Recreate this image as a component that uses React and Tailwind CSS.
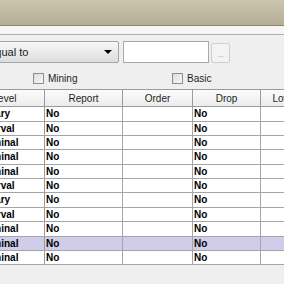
import React from 'react';

const rows = [
  { level: 'Binary', h: 'h-[15px]' },
  { level: 'Interval', h: 'h-[14px]' },
  { level: 'Nominal', h: 'h-[14px]' },
  { level: 'Nominal', h: 'h-[15px]' },
  { level: 'Nominal', h: 'h-[14px]' },
  { level: 'Interval', h: 'h-[14px]' },
  { level: 'Binary', h: 'h-[15px]' },
  { level: 'Interval', h: 'h-[14px]' },
  { level: 'Nominal', h: 'h-[15px]' },
  { level: 'Nominal', h: 'h-[14px]', selected: true },
  { level: 'Nominal', h: 'h-[14px]' },
];

const cols = 'grid grid-cols-[80px_78px_70px_68px_75px]';

function Checkbox({ label }) {
  return (
    <label className="flex w-[139px] items-center gap-[4px]">
      <span className="h-[11px] w-[11px] border border-[#8e8f8f] bg-gradient-to-br from-[#dcdcdc] to-[#f8f8f8]" />
      <span>{label}</span>
    </label>
  );
}

export default function App() {
  return (
    <div className="h-[284px] w-[284px] overflow-hidden bg-[#efefef] text-[10px] text-[#1e1e1e] [font-family:'Liberation_Sans',Arial,sans-serif]">
      {/* title bar */}
      <div className="h-[26px] border-b border-[#8b846f] bg-gradient-to-b from-[#cbc4ae] to-[#b6ae96]" />
      <div className="h-[9px] border-b border-[#aeaeae] bg-[#f6f6f6]" />

      {/* window content, scrolled to the left */}
      <div className="-ml-[35px] w-[400px]">
        {/* filter row */}
        <div className="flex items-center pt-[6px]">
          <div className="ml-[19px] flex h-[22px] w-[135px] items-center justify-between rounded-[2px] border border-[#a3a3a3] bg-gradient-to-b from-[#f7f7f7] to-[#dddddd] pl-[3px] pr-[6px] text-[11px]">
            <span>Equal to</span>
            <span className="h-0 w-0 border-x-[4px] border-t-[4px] border-x-transparent border-t-black" />
          </div>
          <div className="ml-[4px] h-[22px] w-[86px] border border-[#a9a9a9] bg-white" />
          <button className="ml-[2px] mt-[2px] flex h-[20px] w-[19px] items-end justify-center rounded-[2px] border border-[#cfcfcf] bg-[#f3f3f3] pb-[3px] text-[8px] leading-none text-[#9a9a9a]">
            ...
          </button>
        </div>

        {/* columns checkboxes */}
        <div className="ml-[68px] mt-[5px] flex h-[20px] items-center">
          <Checkbox label="Mining" />
          <Checkbox label="Basic" />
        </div>

        {/* table */}
        <div className="mt-[1px] bg-white">
          <div className={`${cols} h-[18px] border-y border-[#9b9b9b] bg-gradient-to-b from-[#fbfbfb] to-[#ececec]`}>
            {['Level', 'Report', 'Order', 'Drop', 'Lower Limit'].map((h) => (
              <div key={h} className="flex items-center justify-center overflow-hidden whitespace-nowrap border-r border-[#9b9b9b]">
                {h}
              </div>
            ))}
          </div>
          {rows.map((r, i) => (
            <div
              key={i}
              className={`${cols} ${r.h} border-b border-[#a5a5a5] font-bold leading-none text-black ${r.selected ? 'bg-[#cfcde9]' : 'bg-white'}`}
            >
              <div className="flex items-center overflow-hidden whitespace-nowrap border-r border-[#9b9b9b] pl-[14px]">{r.level}</div>
              <div className="flex items-center border-r border-[#a5a5a5] pl-[1px]">No</div>
              <div className="border-r border-[#a5a5a5]" />
              <div className="flex items-center border-r border-[#a5a5a5] pl-[1px]">No</div>
              <div className="border-r border-[#a5a5a5]" />
            </div>
          ))}
        </div>
      </div>
    </div>
  );
}
